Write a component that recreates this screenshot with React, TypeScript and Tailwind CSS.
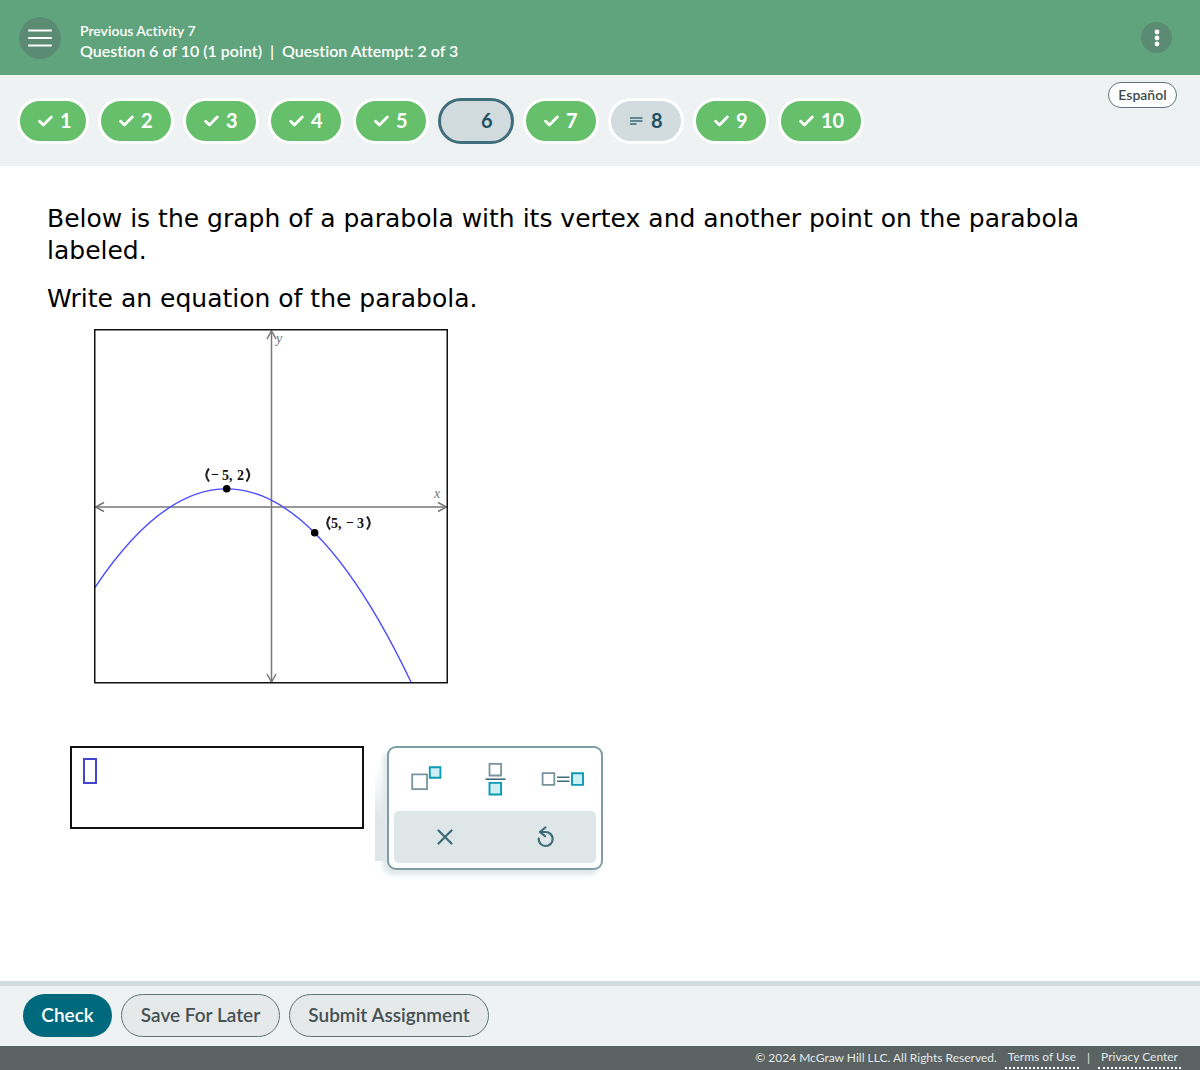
import React, { useState } from "react";

type Status = "correct" | "current" | "partial";

interface Question {
  id: number;
  status: Status;
}

const questions: Question[] = [
  { id: 1, status: "correct" },
  { id: 2, status: "correct" },
  { id: 3, status: "correct" },
  { id: 4, status: "correct" },
  { id: 5, status: "correct" },
  { id: 6, status: "current" },
  { id: 7, status: "correct" },
  { id: 8, status: "partial" },
  { id: 9, status: "correct" },
  { id: 10, status: "correct" },
];

const pillStyles: Record<Status, string> = {
  correct: "border-white bg-[#66bf6a] text-white",
  current: "border-[#416e7c] bg-[#d2dbde] text-[#1f5262]",
  partial: "border-white bg-[#d2dbde] text-[#1f5262]",
};

const CheckIcon = () => (
  <svg width="15" height="14" viewBox="0 0 15 14" fill="none" aria-hidden="true">
    <path d="M1.600 8.200 5.400 11.900 13.300 4" stroke="currentColor" strokeWidth="2.800" strokeLinecap="round" strokeLinejoin="round" />
  </svg>
);

const PartialIcon = () => (
  <svg width="15" height="14" viewBox="0 0 15 14" fill="none" aria-hidden="true">
    <path d="M1 5h12.500M1 8h12.500M1 11h6.500" stroke="#5f8791" strokeWidth="2" />
  </svg>
);

const QuestionPill = ({ id, status }: Question) => {
  // the first pill is a bit narrower, the last one fits two digits
  const width = id === 1 ? "w-[72px]" : id === 10 ? "w-[86px]" : "w-[76px]";

  return (
    <button
      aria-current={status === "current" ? "step" : undefined}
      className={`${width} ${pillStyles[status]} flex h-[46px] shrink-0 items-center gap-2 rounded-full border-[3px] pb-0.5 pl-[18px] text-xl font-bold`}
    >
      <span className="w-3.5">
        {status === "correct" && <CheckIcon />}
        {status === "partial" && <PartialIcon />}
      </span>
      {id}
    </button>
  );
};

const Graph = () => (
  <svg width="354" height="355" viewBox="0 0 354 355" fill="none" role="img" aria-label="Graph of a parabola">
    {/* axes */}
    <g stroke="#777" strokeWidth="1.500">
      <path d="M177.500 2v351M2 178h350" />
      <path d="M173 10l4.500-8 4.500 8M173 345l4.500 8 4.500-8" />
      <path d="M10 173.500l-8.500 4.500 8.500 4.500M344 173.500l8.500 4.500-8.500 4.500" />
    </g>
    {/* curve with vertex at (132.7, 159.8) */}
    <path d="M1 258.400Q159 21.900 317 353" stroke="#4a4aff" strokeWidth="1.400" />
    <rect x="0.750" y="0.750" width="352.500" height="353" stroke="#111" strokeWidth="1.500" />
    <circle cx="132.700" cy="159.800" r="3.800" fill="#000" />
    <circle cx="220.700" cy="203.700" r="3.800" fill="#000" />
    <g className="font-['Liberation_Serif'] text-[14px]">
      <text x="182" y="14" fill="#777" fontStyle="italic">y</text>
      <text x="340" y="169" fill="#777" fontStyle="italic">x</text>
      <g fill="#111" fontWeight="700">
        <text x="128" y="151">5,</text>
        <text x="143" y="151">2</text>
        <text x="117" y="150">−</text>
        <text x="237" y="199">5,</text>
        <text x="252" y="198">−</text>
        <text x="263" y="199">3</text>
      </g>
    </g>
    <g stroke="#222" strokeWidth="2">
      <path d="M115 139.500q-5.500 6.500 0 13M152.500 139.500q5.500 6.500 0 13" />
      <path d="M236 187.500q-5.500 6.500 0 13M273 187.500q5.500 6.500 0 13" />
    </g>
  </svg>
);

const AnswerPalette = () => (
  <div className="relative">
    {/* soft strip along the left edge */}
    <div className="absolute top-5 -left-3 h-[95px] w-3 bg-gradient-to-b from-white via-[#dfe6e8] via-60% to-[#dfe6e8]" />
    <div className="relative w-[216px] rounded-[9px] border-2 border-[#7f9da4] bg-white p-[5px] shadow-[-4px_5px_5px_#dfe8ea]">
      <div className="mb-1.5 grid h-[52px] grid-cols-3">
        <button aria-label="Exponent" className="flex items-center justify-center">
          <svg width="44" height="34" viewBox="0 0 44 34" fill="none">
            <path d="M6.200 12.400h14.800v14.800h-14.800z" stroke="#78949c" strokeWidth="1.800" />
            <path d="M23.800 5.200h10.600v10.600h-10.600z" fill="#cdeef2" stroke="#0a9ab5" strokeWidth="1.900" />
          </svg>
        </button>
        <button aria-label="Fraction" className="flex items-center justify-center">
          <svg width="44" height="34" viewBox="0 0 44 34" fill="none">
            <path d="M16.500 1.900h11.600v11.600h-11.600z" stroke="#78949c" strokeWidth="1.800" />
            <path d="M12.500 17.200h20" stroke="#3c6b79" strokeWidth="1.600" />
            <path d="M16.500 20.900h11.600v11.600h-11.600z" fill="#cdeef2" stroke="#0a9ab5" strokeWidth="1.900" />
          </svg>
        </button>
        <button aria-label="Equation" className="flex items-center justify-center">
          <svg width="44" height="34" viewBox="0 0 44 34" fill="none">
            <path d="M2.600 11.200h11.700v11.700h-11.700z" stroke="#78949c" strokeWidth="1.800" />
            <path d="M17 15.300h12.500M17 19.200h12.500" stroke="#3c6b79" strokeWidth="1.600" />
            <path d="M32 11.200h11v11.700h-11z" fill="#cdeef2" stroke="#0a9ab5" strokeWidth="1.900" />
          </svg>
        </button>
      </div>
      <div className="grid h-[52px] grid-cols-2 rounded-[5px] bg-[#dfe6e8]">
        <button aria-label="Clear" className="flex items-center justify-center">
          <svg width="16" height="16" viewBox="0 0 16 16" fill="none">
            <path d="M1.500 1.500l13 13M14.500 1.500l-13 13" stroke="#3c6b79" strokeWidth="2.200" strokeLinecap="round" />
          </svg>
        </button>
        <button aria-label="Reset" className="flex items-center justify-center">
          <svg width="18" height="22" viewBox="0 0 18 22" fill="none" stroke="#3c6b79" strokeWidth="2.200" strokeLinecap="round" strokeLinejoin="round">
            <path d="M3 6H8.700a7 7 0 1 1-7 6.500" />
            <path d="M8.300 1.500L3 6l5 4.200" />
          </svg>
        </button>
      </div>
    </div>
  </div>
);

const App = () => {
  const [answer, setAnswer] = useState("");

  return (
    <div className="flex min-h-screen flex-col bg-white font-['Lato',sans-serif] [font-variant-ligatures:none]">
      <header className="flex h-[75px] items-center bg-[#60a47d] pr-7 pl-[19px] text-white">
        <button aria-label="Menu" className="flex size-[42px] items-center justify-center rounded-full bg-[#5b8c73]">
          <svg width="26" height="20" viewBox="0 0 26 20" fill="none">
            <path d="M2 2.500h22M2 10h22M2 17.500h22" stroke="#fff" strokeWidth="2" strokeLinecap="round" />
          </svg>
        </button>
        <div className="ml-[19px] pt-1.5 font-semibold">
          <h1 className="text-sm leading-5">Previous Activity 7</h1>
          <p className="flex text-base leading-5">
            <span>Question 6 of 10 (1 point)</span>
            <span className="mx-2">|</span>
            <span>Question Attempt: 2 of 3</span>
          </p>
        </div>
        <button aria-label="More options" className="ml-auto flex size-[31px] items-center justify-center rounded-full bg-[#5b8c73]">
          <svg width="6" height="18" viewBox="0 0 6 18" fill="#fff">
            <circle cx="3" cy="3" r="2.400" />
            <circle cx="3" cy="9" r="2.400" />
            <circle cx="3" cy="15" r="2.400" />
          </svg>
        </button>
      </header>

      <nav className="flex h-[91px] items-start justify-between bg-[#eef2f3] pr-[23px] pl-[17px]">
        <div className="flex gap-[9px] pt-[23px]">
          {questions.map((q) => (
            <QuestionPill key={q.id} id={q.id} status={q.status} />
          ))}
        </div>
        <button className="mt-[7px] h-[26px] w-[69px] rounded-full border border-[#5f7377] bg-white text-sm font-semibold text-[#3e4a4b]">
          Español
        </button>
      </nav>

      <main className="flex-1 px-[47px] pt-[37px]">
        <div className="space-y-4 font-['DejaVu_Sans',sans-serif] text-[25px] leading-8 text-black">
          <p>Below is the graph of a parabola with its vertex and another point on the parabola labeled.</p>
          <p>Write an equation of the parabola.</p>
        </div>
        <div className="mt-3.5 ml-[47px]">
          <Graph />
        </div>
        <div className="mt-[62px] ml-[23px] flex items-start gap-[23px]">
          <label className="block h-[83px] w-[294px] border-2 border-[#111] px-[11px] py-2.5">
            <input
              aria-label="Equation of the parabola"
              value={answer}
              onChange={(e) => setAnswer(e.target.value)}
              className="block h-[26px] w-3.5 border-2 border-[#4343cf] outline-none"
            />
          </label>
          <AnswerPalette />
        </div>
      </main>

      <div className="flex gap-[9px] border-t-[5px] border-[#d0dbdd] bg-[#eef2f3] px-[23px] pt-2 pb-[9px] text-[19px] font-semibold">
        <button className="h-[43px] w-[89px] rounded-full bg-[#006a7c] text-white">Check</button>
        <button className="h-[43px] w-[159px] rounded-full border border-[#5f7377] bg-[#e6e9ea] text-[#465152]">Save For Later</button>
        <button className="h-[43px] w-[200px] rounded-full border border-[#5f7377] bg-[#e6e9ea] text-[#465152]">Submit Assignment</button>
      </div>
      <footer className="flex h-6 items-center justify-end bg-[#5a6262] pr-[19px] text-xs leading-5 text-[#e3e8e8]">
        <span>© 2024 McGraw Hill LLC. All Rights Reserved.</span>
        <a href="#terms" className="ml-2 border-b-2 border-dotted border-white px-[3px]">Terms of Use</a>
        <span className="mx-2">|</span>
        <a href="#privacy" className="border-b-2 border-dotted border-white px-[3px]">Privacy Center</a>
      </footer>
    </div>
  );
};

export default App;
